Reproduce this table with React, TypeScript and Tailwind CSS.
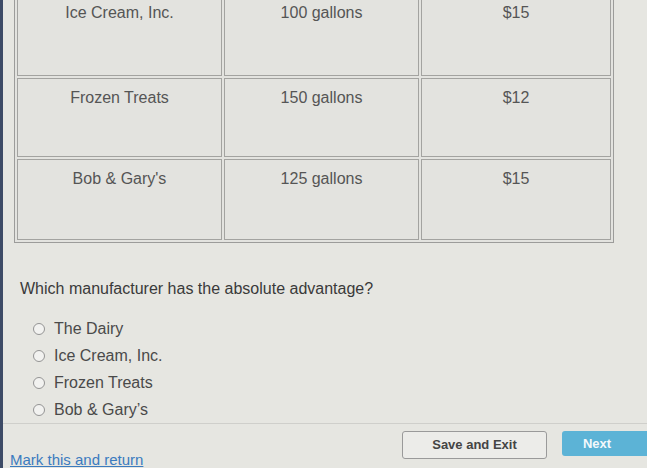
import React from "react";

const rows = [
  { name: "Ice Cream, Inc.", amount: "100 gallons", price: "$15", h: "h-[83px]" },
  { name: "Frozen Treats", amount: "150 gallons", price: "$12", h: "h-[79px]" },
  { name: "Bob & Gary's", amount: "125 gallons", price: "$15", h: "h-[81px]" },
];

const options = ["The Dairy", "Ice Cream, Inc.", "Frozen Treats", "Bob & Gary’s"];

export default function App() {
  return (
    <div className="w-[647px] h-[468px] overflow-hidden bg-[#e6e6e1] border-l-[3px] border-[#3d4b66] font-['Liberation_Sans',Arial,sans-serif]">
      <div className="pl-[11px] -mt-[10px]">
        <table className="w-[600px] border-separate border-spacing-[2px] border border-[#9c9c9a] bg-[#e3e3df]">
          <tbody>
            {rows.map((r) => (
              <tr key={r.name} className={r.h}>
                <td className="w-[205px] border border-[#a3a3a0] align-top text-center pt-[7px] text-[16px] text-[#555]">
                  {r.name}
                </td>
                <td className="w-[195px] border border-[#a3a3a0] align-top text-center pt-[7px] text-[16px] text-[#555]">
                  {r.amount}
                </td>
                <td className="border border-[#a3a3a0] align-top text-center pt-[7px] text-[16px] text-[#555]">
                  {r.price}
                </td>
              </tr>
            ))}
          </tbody>
        </table>
      </div>

      <p className="mt-[36px] ml-[17px] text-[16px] leading-[20px] text-[#3a3a3a]">
        Which manufacturer has the absolute advantage?
      </p>

      <div className="mt-[16px] ml-[30px]">
        {options.map((o) => (
          <div key={o} className="h-[27px] flex items-center gap-[9px]">
            <span className="w-[12px] h-[12px] rounded-full border border-[#949494] bg-[#f2f2f0]" />
            <span className="text-[16px] text-[#4a4a4a]">{o}</span>
          </div>
        ))}
      </div>

      <div className="h-px bg-[#cfcfcb]" />

      <div className="flex">
        <div className="flex-1 pl-[7px] pt-[24px]">
          <a className="text-[15px] leading-[16px] text-[#3b7bbf] underline">Mark this and return</a>
        </div>
        <button className="mt-[7px] w-[145px] h-[28px] rounded-[3px] border border-[#9a9a9a] bg-[#ecece9] text-[13px] font-bold text-[#444]">
          Save and Exit
        </button>
        <button className="mt-[7px] ml-[15px] w-[100px] h-[25px] -mr-[15px] rounded-[3px] bg-[#5cb3d6] pr-[30px] text-[13px] font-bold text-[#f4f8fb]">
          Next
        </button>
      </div>
    </div>
  );
}
